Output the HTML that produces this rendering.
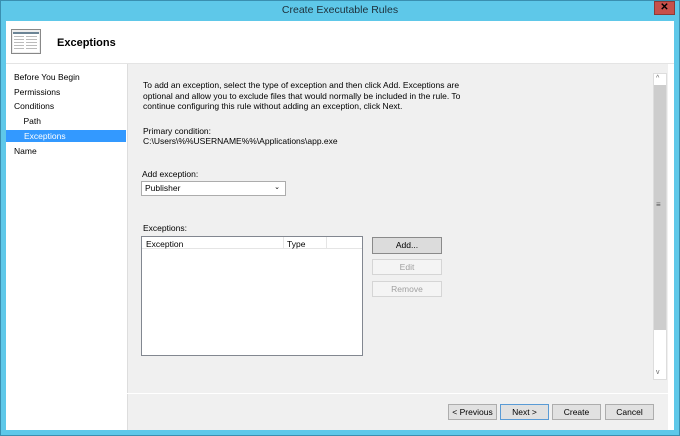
<!DOCTYPE html>
<html><head><style>
*{margin:0;padding:0;box-sizing:border-box}
body{width:680px;height:436px;background:#5ec8e9;font-family:"Liberation Sans",sans-serif;font-size:8.5px;color:#000;position:relative;overflow:hidden}
.a{position:absolute}
.btn{position:absolute;height:16px;border:1px solid #adadad;background:#e1e1e1;text-align:center;line-height:14px;font-size:8.5px}
</style></head><body>
<div class="a" style="left:0;top:0;width:680px;height:436px;border:1px solid #3a8fb0"></div>
<div class="a" style="left:0;top:4px;width:680px;text-align:center;font-size:10.5px;color:#1d2f3a">Create Executable Rules</div>
<div class="a" style="left:654px;top:1px;width:21px;height:14px;background:#c7504a;border:1px solid #8b3a36;color:#000;text-align:center;font-size:10px;line-height:12px;font-weight:bold">✕</div>
<div class="a" style="left:6px;top:21px;width:668px;height:409px;background:#fff"></div>
<div class="a" style="left:11px;top:29px;width:30px;height:25px;border:1px solid #888;background:#eee"></div>
<div class="a" style="left:13px;top:32px;width:26px;height:20px;background:#fff;border-top:2px solid #6c8596"></div>
<div class="a" style="left:14px;top:36px;width:10px;height:14px;background:repeating-linear-gradient(#bbb 0 1px,#fff 1px 3px)"></div>
<div class="a" style="left:26px;top:36px;width:11px;height:14px;background:repeating-linear-gradient(#bbb 0 1px,#fff 1px 3px)"></div>
<div class="a" style="left:57px;top:37px;font-size:11px;font-weight:bold">Exceptions</div>
<div class="a" style="left:6px;top:63px;width:668px;height:1px;background:#e4e4e4"></div>
<div class="a" style="left:14px;top:70px;line-height:14.7px">Before You Begin<br>Permissions<br>Conditions<br>&nbsp;&nbsp;&nbsp;&nbsp;Path</div>
<div class="a" style="left:6px;top:130px;width:120px;height:12px;background:#3399ff"></div>
<div class="a" style="left:24px;top:131px;color:#fff">Exceptions</div>
<div class="a" style="left:14px;top:146px">Name</div>
<div class="a" style="left:127px;top:64px;width:541px;height:366px;background:#f0f0f0;border-left:1px solid #ddd"></div>
<div class="a" style="left:143px;top:80px;line-height:10.5px">To add an exception, select the type of exception and then click Add. Exceptions are<br>optional and allow you to exclude files that would normally be included in the rule. To<br>continue configuring this rule without adding an exception, click Next.</div>
<div class="a" style="left:143px;top:126px;line-height:10px">Primary condition:<br>C:\Users\%%USERNAME%%\Applications\app.exe</div>
<div class="a" style="left:142px;top:169px">Add exception:</div>
<div class="a" style="left:141px;top:181px;width:145px;height:15px;background:#fff;border:1px solid #acacac;padding-left:3px;line-height:13px">Publisher<span style="position:absolute;right:5px;top:-1px;font-size:7px">⌄</span></div>
<div class="a" style="left:143px;top:223px">Exceptions:</div>
<div class="a" style="left:141px;top:236px;width:222px;height:120px;background:#fff;border:1px solid #828790"></div>
<div class="a" style="left:142px;top:237px;width:220px;height:12px;border-bottom:1px solid #e5e5e5"></div>
<div class="a" style="left:283px;top:237px;width:1px;height:12px;background:#e5e5e5"></div>
<div class="a" style="left:326px;top:237px;width:1px;height:12px;background:#e5e5e5"></div>
<div class="a" style="left:146px;top:239px">Exception</div>
<div class="a" style="left:287px;top:239px">Type</div>
<div class="btn" style="left:372px;top:237px;width:70px;height:17px;background:#dcdcdc;border-color:#8a8a8a">Add...</div>
<div class="btn" style="left:372px;top:259px;width:70px;color:#a0a0a0;background:#f4f4f4;border-color:#d5d5d5">Edit</div>
<div class="btn" style="left:372px;top:281px;width:70px;color:#a0a0a0;background:#f4f4f4;border-color:#d5d5d5">Remove</div>
<div class="a" style="left:653px;top:73px;width:14px;height:307px;background:#fff;border:1px solid #ddd"></div>
<div class="a" style="left:654px;top:85px;width:12px;height:245px;background:#cdcdcd"></div>
<div class="a" style="left:656px;top:75px;font-size:7px;color:#666">^</div>
<div class="a" style="left:656px;top:200px;font-size:8px;color:#555">≡</div>
<div class="a" style="left:656px;top:369px;font-size:7px;color:#666">v</div>
<div class="a" style="left:127px;top:393px;width:541px;height:1px;background:#fff"></div>
<div class="btn" style="left:448px;top:404px;width:49px">&lt; Previous</div>
<div class="btn" style="left:500px;top:404px;width:49px;border-color:#5a9bd5">Next &gt;</div>
<div class="btn" style="left:552px;top:404px;width:49px">Create</div>
<div class="btn" style="left:605px;top:404px;width:49px">Cancel</div>
</body></html>
